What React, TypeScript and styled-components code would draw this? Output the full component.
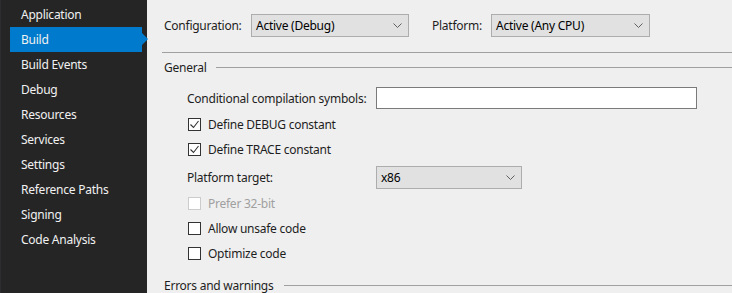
import { FC } from "react";
import styled, { createGlobalStyle } from "styled-components";

const GlobalStyle = createGlobalStyle`
  html, body {
    margin: 0;
    padding: 0;
    background: #efefef;
  }
  body {
    font-family: "Segoe UI", "Noto Sans", "Liberation Sans", sans-serif;
    font-size: 12px;
    letter-spacing: -0.25px;
    color: #1e1e1e;
  }
  * {
    box-sizing: border-box;
  }
`;

const pages = [
  "Application",
  "Build",
  "Build Events",
  "Debug",
  "Resources",
  "Services",
  "Settings",
  "Reference Paths",
  "Signing",
  "Code Analysis",
];

const Chevron: FC = () => (
  <svg width="9" height="5" viewBox="0 0 9 5">
    <path d="M0.5 0.5 L4.5 4.5 L8.5 0.5" fill="none" stroke="#606060" strokeWidth="1" />
  </svg>
);

const CheckMark: FC = () => (
  <svg width="11" height="11" viewBox="0 0 11 11">
    <path d="M1.5 5.5 L4.5 8.5 L9.5 2" fill="none" stroke="#333" strokeWidth="1.1" />
  </svg>
);

const App: FC = () => {
  return (
    <>
      <GlobalStyle />
      <Window>
        <Sidebar>
          {pages.map((p) => (
            <NavItem key={p} $active={p === "Build"}>
              {p}
            </NavItem>
          ))}
        </Sidebar>

        <Main>
          <Toolbar>
            <Label>Configuration:</Label>
            <Select $width={158}>
              <span>Active (Debug)</span>
              <Chevron />
            </Select>
            <ToolbarLabel>Platform:</ToolbarLabel>
            <Select $width={159}>
              <span>Active (Any CPU)</span>
              <Chevron />
            </Select>
          </Toolbar>

          <Rule />

          <SectionHeader>
            <span>General</span>
            <HeaderLine />
          </SectionHeader>

          <Form>
            <FieldRow>
              <FieldLabel>Conditional compilation symbols:</FieldLabel>
              <TextBox />
            </FieldRow>

            <CheckRow>
              <Box>
                <CheckMark />
              </Box>
              Define DEBUG constant
            </CheckRow>
            <CheckRow>
              <Box>
                <CheckMark />
              </Box>
              Define TRACE constant
            </CheckRow>

            <FieldRow $spaced>
              <FieldLabel>Platform target:</FieldLabel>
              <Select $width={146}>
                <span>x86</span>
                <Chevron />
              </Select>
            </FieldRow>

            <CheckRow $disabled>
              <Box $disabled />
              Prefer 32-bit
            </CheckRow>
            <CheckRow>
              <Box />
              Allow unsafe code
            </CheckRow>
            <CheckRow>
              <Box />
              Optimize code
            </CheckRow>
          </Form>

          <SectionHeader $last>
            <span>Errors and warnings</span>
            <HeaderLine />
          </SectionHeader>
        </Main>
      </Window>
    </>
  );
};

const Window = styled.div`
  display: flex;
  width: 732px;
  height: 293px;
  overflow: hidden;
`;

const Sidebar = styled.nav`
  width: 147px;
  flex-shrink: 0;
  background: #252526;
  border-left: 1px solid #2d2d30;
  padding-top: 2px;
`;

const NavItem = styled.div<{ $active?: boolean }>`
  position: relative;
  height: 25px;
  line-height: 25px;
  margin-left: 9px;
  width: 132px;
  padding-left: 11px;
  color: #f1f1f1;
  background: ${(p) => (p.$active ? "#007acc" : "transparent")};

  &::after {
    content: "";
    display: ${(p) => (p.$active ? "block" : "none")};
    position: absolute;
    right: -6px;
    top: 6px;
    border-top: 6px solid transparent;
    border-bottom: 6px solid transparent;
    border-left: 6px solid #007acc;
  }
`;

const Main = styled.main`
  flex: 1;
  background: #efefef;
  padding-top: 14px;
`;

const Toolbar = styled.div`
  display: flex;
  align-items: center;
  height: 23px;
  padding-left: 17px;
`;

const Label = styled.span`
  width: 87px;
`;

const ToolbarLabel = styled.span`
  margin-left: 23px;
  width: 59px;
`;

const Select = styled.div<{ $width: number }>`
  display: flex;
  align-items: center;
  justify-content: space-between;
  width: ${(p) => p.$width}px;
  height: 23px;
  padding: 0 6px 0 4px;
  background: #e1e1e1;
  border: 1px solid #adadad;
  color: #000;
`;

const Rule = styled.div`
  height: 1px;
  background: #a0a0a0;
  margin: 15px 0 0 15px;
`;

const SectionHeader = styled.div<{ $last?: boolean }>`
  display: flex;
  align-items: center;
  height: 16px;
  margin-top: ${(p) => (p.$last ? "11px" : "6px")};
  padding-left: 17px;
  color: #1e1e1e;
`;

const HeaderLine = styled.div`
  flex: 1;
  height: 1px;
  background: #a0a0a0;
  margin-left: 10px;
`;

const Form = styled.div`
  display: flex;
  flex-direction: column;
  padding-left: 40px;
  margin-top: 12px;
`;

const FieldRow = styled.div<{ $spaced?: boolean }>`
  display: flex;
  align-items: center;
  height: 22px;
  margin: ${(p) => (p.$spaced ? "4px 0 3px" : "0 0 3px")};
`;

const FieldLabel = styled.span`
  width: 189px;
`;

const TextBox = styled.div`
  width: 321px;
  height: 22px;
  background: #fff;
  border: 1px solid #7a7a7a;
`;

const CheckRow = styled.div<{ $disabled?: boolean }>`
  display: flex;
  align-items: center;
  height: 25px;
  padding-left: 1px;
  gap: 7px;
  color: ${(p) => (p.$disabled ? "#a0a0a0" : "#1e1e1e")};
`;

const Box = styled.span<{ $disabled?: boolean }>`
  display: flex;
  align-items: center;
  justify-content: center;
  width: 13px;
  height: 13px;
  background: #fff;
  border: 1px solid ${(p) => (p.$disabled ? "#cccccc" : "#333333")};
`;

export default App;
